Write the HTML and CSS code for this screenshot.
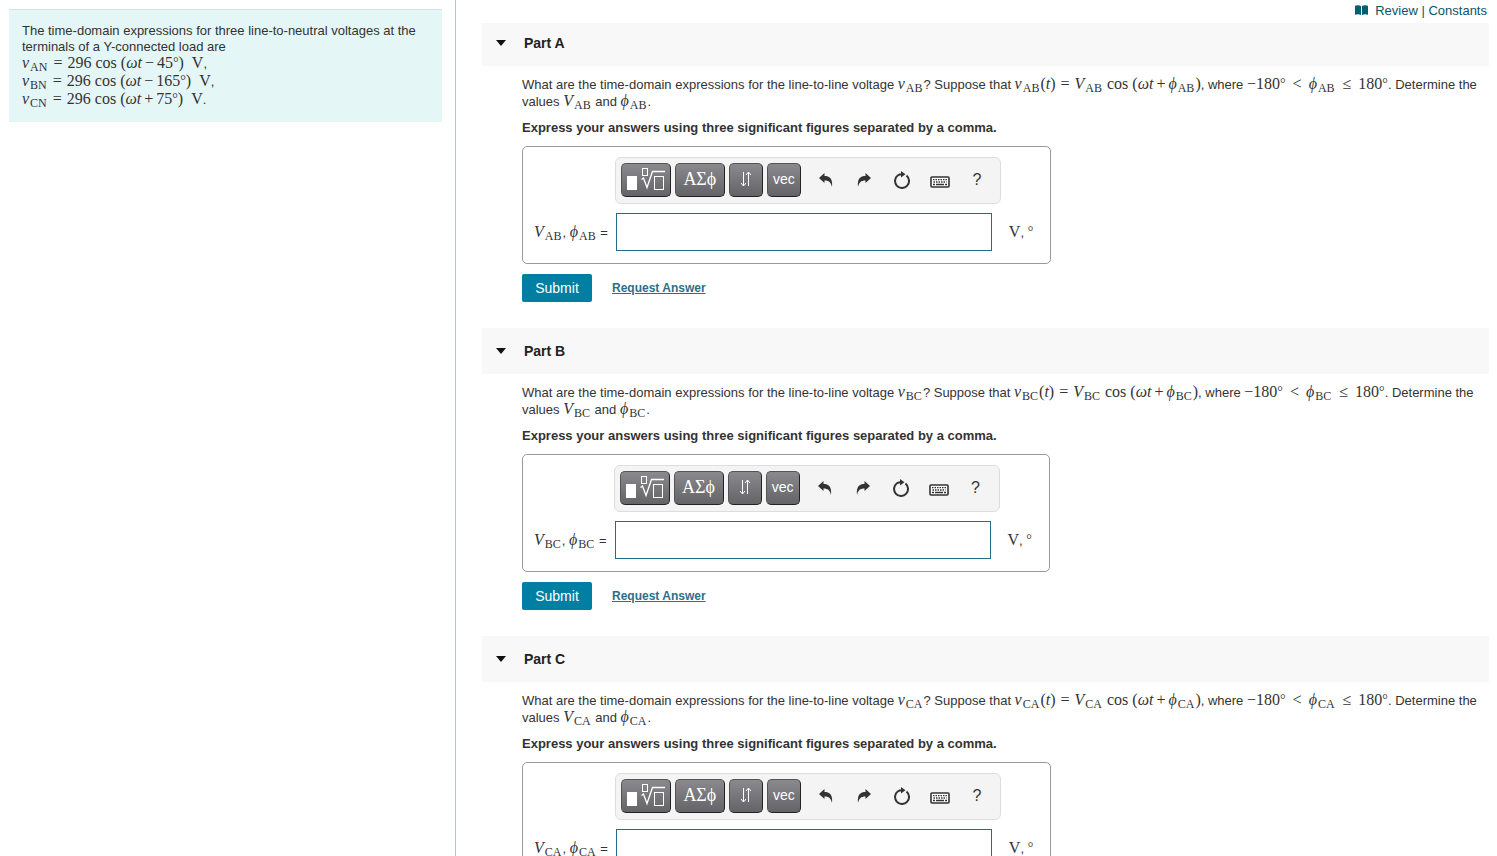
FILE: index.html
```
<!DOCTYPE html>
<html lang="en">
<head>
  <meta charset="UTF-8">
  <title>Three-phase voltages</title>
  <link rel="stylesheet" href="styles.css">
</head>
<body>
  <svg class="icon-defs" aria-hidden="true">
    <symbol id="icon-template" viewBox="0 0 38 24">
      <rect x="0" y="9" width="10" height="14" fill="#fff"/>
      <path d="M14.500 12.500l2-1.500 3.500 9.500L25.500 4.500H38" fill="none" stroke="#fff" stroke-width="1.300"/>
      <rect x="15.500" y="1.500" width="5" height="7" fill="none" stroke="#fff"/>
      <rect x="27.500" y="9.500" width="9" height="13" fill="none" stroke="#fff"/>
    </symbol>
    <symbol id="icon-arrows" viewBox="0 0 12 16">
      <path d="M3.500 1v14M1 12l2.500 3L6 12M8.500 15V1M6 4l2.500-3L11 4" fill="none" stroke="#fff"/>
    </symbol>
    <symbol id="icon-undo" viewBox="0 0 14 14">
      <path d="M0 5L5.500 0v3C10.500 3 14 5.500 13 14 12 9.500 10 7.500 5.500 7.500V10z" fill="#333"/>
    </symbol>
    <symbol id="icon-redo" viewBox="0 0 14 14">
      <path d="M14 5L8.500 0v3C3.500 3 0 5.500 1 14 2 9.500 4 7.500 8.500 7.500V10z" fill="#333"/>
    </symbol>
    <symbol id="icon-reset" viewBox="0 0 18 18">
      <path d="M13.500 4.600A7 7 0 1 1 5 4.300Q6.500 3.200 9 3.200" fill="none" stroke="#333" stroke-width="2"/>
      <path d="M8 0l4.500 3.200L8 6.400z" fill="#333"/>
    </symbol>
    <symbol id="icon-keyboard" viewBox="0 0 20 12">
      <rect x="1" y="1" width="18" height="10" rx="1" fill="#fff" stroke="#333" stroke-width="1.600"/>
      <path d="M3 3.700h14M3.500 6h13" stroke="#333" stroke-width="1.300" stroke-dasharray="1.500 1"/>
      <path d="M3 8.500h2M6 8.500h8M15 8.500h2" stroke="#333" stroke-width="1.400"/>
    </symbol>
    <symbol id="icon-book" viewBox="0 0 13 10">
      <path d="M0 .8C2 0 4.500 0 6 1v9C4.500 9 2 9 0 9.700zM13 .8C11 0 8.500 0 7 1v9c1.500-1 4-1 6-.3z" fill="#005f70"/>
    </symbol>
    <symbol id="icon-caret" viewBox="0 0 10 6">
      <path d="M0 0h10L5 6z" fill="#111"/>
    </symbol>
  </svg>

  <div class="page">
    <aside class="side">
      <div class="problem">
        <p>The time-domain expressions for three line-to-neutral voltages at the terminals of a Y-connected load are</p>
        <p class="equation"><span class="math"><var>v</var><sub>AN</sub><span class="rel">=</span>296 <span class="fn">cos</span> (<var>ωt</var><span class="bin">−</span>45<sup>°</sup>)<span class="volt">V</span></span>,</p>
        <p class="equation"><span class="math"><var>v</var><sub>BN</sub><span class="rel">=</span>296 <span class="fn">cos</span> (<var>ωt</var><span class="bin">−</span>165<sup>°</sup>)<span class="volt">V</span></span>,</p>
        <p class="equation"><span class="math"><var>v</var><sub>CN</sub><span class="rel">=</span>296 <span class="fn">cos</span> (<var>ωt</var><span class="bin">+</span>75<sup>°</sup>)<span class="volt">V</span></span>.</p>
      </div>
    </aside>

    <main class="main">
      <nav class="top-links">
        <svg class="book" width="13" height="10"><use href="#icon-book"/></svg>
        <a href="#review">Review</a> | <a href="#constants">Constants</a>
      </nav>

      <div class="parts">
        <section class="part">
          <h2 class="part-header"><svg width="10" height="6"><use href="#icon-caret"/></svg>Part A</h2>
          <div class="part-body">
            <p class="question">What are the time-domain expressions for the line-to-line voltage <span class="math"><var>v</var><sub>AB</sub></span>? Suppose that <span class="math"><var>v</var><sub>AB</sub>(<var>t</var>)<span class="rel">=</span><var>V</var><sub>AB</sub> <span class="fn">cos</span> (<var>ωt</var><span class="bin">+</span><var>ϕ</var><sub>AB</sub>)</span>, where <span class="math">−180<sup>°</sup><span class="cmp">&lt;</span><var>ϕ</var><sub>AB</sub><span class="cmp">≤</span>180<sup>°</sup></span>. Determine the values <span class="math"><var>V</var><sub>AB</sub></span> and <span class="math"><var>ϕ</var><sub>AB</sub></span>.</p>
            <p class="instruction">Express your answers using three significant figures separated by a comma.</p>
            <div class="answer">
              <div class="toolbar">
                <button class="key wide" aria-label="Templates"><svg width="38" height="24"><use href="#icon-template"/></svg></button>
                <button class="key wide greek">ΑΣϕ</button>
                <button class="key" aria-label="Arrows"><svg width="12" height="16"><use href="#icon-arrows"/></svg></button>
                <button class="key">vec</button>
                <div class="tools">
                  <button aria-label="Undo"><svg width="14" height="14"><use href="#icon-undo"/></svg></button>
                  <button aria-label="Redo"><svg width="14" height="14"><use href="#icon-redo"/></svg></button>
                  <button aria-label="Reset"><svg width="18" height="18"><use href="#icon-reset"/></svg></button>
                  <button aria-label="Keyboard"><svg class="keyboard" width="20" height="12"><use href="#icon-keyboard"/></svg></button>
                  <button>?</button>
                </div>
              </div>
              <label for="answer-a"><span class="math"><var>V</var><sub>AB</sub></span>, <span class="math"><var>ϕ</var><sub>AB</sub></span> =</label>
              <input type="text" id="answer-a">
              <span class="unit"><span class="math">V</span>, <span class="math"><sup>°</sup></span></span>
            </div>
            <div class="actions">
              <button class="submit">Submit</button>
              <a href="#request-a">Request Answer</a>
            </div>
          </div>
        </section>

        <section class="part">
          <h2 class="part-header"><svg width="10" height="6"><use href="#icon-caret"/></svg>Part B</h2>
          <div class="part-body">
            <p class="question">What are the time-domain expressions for the line-to-line voltage <span class="math"><var>v</var><sub>BC</sub></span>? Suppose that <span class="math"><var>v</var><sub>BC</sub>(<var>t</var>)<span class="rel">=</span><var>V</var><sub>BC</sub> <span class="fn">cos</span> (<var>ωt</var><span class="bin">+</span><var>ϕ</var><sub>BC</sub>)</span>, where <span class="math">−180<sup>°</sup><span class="cmp">&lt;</span><var>ϕ</var><sub>BC</sub><span class="cmp">≤</span>180<sup>°</sup></span>. Determine the values <span class="math"><var>V</var><sub>BC</sub></span> and <span class="math"><var>ϕ</var><sub>BC</sub></span>.</p>
            <p class="instruction">Express your answers using three significant figures separated by a comma.</p>
            <div class="answer">
              <div class="toolbar">
                <button class="key wide" aria-label="Templates"><svg width="38" height="24"><use href="#icon-template"/></svg></button>
                <button class="key wide greek">ΑΣϕ</button>
                <button class="key" aria-label="Arrows"><svg width="12" height="16"><use href="#icon-arrows"/></svg></button>
                <button class="key">vec</button>
                <div class="tools">
                  <button aria-label="Undo"><svg width="14" height="14"><use href="#icon-undo"/></svg></button>
                  <button aria-label="Redo"><svg width="14" height="14"><use href="#icon-redo"/></svg></button>
                  <button aria-label="Reset"><svg width="18" height="18"><use href="#icon-reset"/></svg></button>
                  <button aria-label="Keyboard"><svg class="keyboard" width="20" height="12"><use href="#icon-keyboard"/></svg></button>
                  <button>?</button>
                </div>
              </div>
              <label for="answer-b"><span class="math"><var>V</var><sub>BC</sub></span>, <span class="math"><var>ϕ</var><sub>BC</sub></span> =</label>
              <input type="text" id="answer-b">
              <span class="unit"><span class="math">V</span>, <span class="math"><sup>°</sup></span></span>
            </div>
            <div class="actions">
              <button class="submit">Submit</button>
              <a href="#request-b">Request Answer</a>
            </div>
          </div>
        </section>

        <section class="part">
          <h2 class="part-header"><svg width="10" height="6"><use href="#icon-caret"/></svg>Part C</h2>
          <div class="part-body">
            <p class="question">What are the time-domain expressions for the line-to-line voltage <span class="math"><var>v</var><sub>CA</sub></span>? Suppose that <span class="math"><var>v</var><sub>CA</sub>(<var>t</var>)<span class="rel">=</span><var>V</var><sub>CA</sub> <span class="fn">cos</span> (<var>ωt</var><span class="bin">+</span><var>ϕ</var><sub>CA</sub>)</span>, where <span class="math">−180<sup>°</sup><span class="cmp">&lt;</span><var>ϕ</var><sub>CA</sub><span class="cmp">≤</span>180<sup>°</sup></span>. Determine the values <span class="math"><var>V</var><sub>CA</sub></span> and <span class="math"><var>ϕ</var><sub>CA</sub></span>.</p>
            <p class="instruction">Express your answers using three significant figures separated by a comma.</p>
            <div class="answer">
              <div class="toolbar">
                <button class="key wide" aria-label="Templates"><svg width="38" height="24"><use href="#icon-template"/></svg></button>
                <button class="key wide greek">ΑΣϕ</button>
                <button class="key" aria-label="Arrows"><svg width="12" height="16"><use href="#icon-arrows"/></svg></button>
                <button class="key">vec</button>
                <div class="tools">
                  <button aria-label="Undo"><svg width="14" height="14"><use href="#icon-undo"/></svg></button>
                  <button aria-label="Redo"><svg width="14" height="14"><use href="#icon-redo"/></svg></button>
                  <button aria-label="Reset"><svg width="18" height="18"><use href="#icon-reset"/></svg></button>
                  <button aria-label="Keyboard"><svg class="keyboard" width="20" height="12"><use href="#icon-keyboard"/></svg></button>
                  <button>?</button>
                </div>
              </div>
              <label for="answer-c"><span class="math"><var>V</var><sub>CA</sub></span>, <span class="math"><var>ϕ</var><sub>CA</sub></span> =</label>
              <input type="text" id="answer-c">
              <span class="unit"><span class="math">V</span>, <span class="math"><sup>°</sup></span></span>
            </div>
            <div class="actions">
              <button class="submit">Submit</button>
              <a href="#request-c">Request Answer</a>
            </div>
          </div>
        </section>
      </div>
    </main>
  </div>
</body>
</html>
```
FILE: styles.css
```
* {
  box-sizing: border-box;
}

body {
  margin: 0;
  font-family: "Liberation Sans", Arial, sans-serif;
  font-size: 13px;
  color: #333;
  background-color: #fff;
}

p {
  margin: 0;
}

button {
  padding: 0;
  border: none;
  background: none;
  font-family: inherit;
  color: inherit;
  cursor: pointer;
}

.icon-defs {
  display: none;
}

.page {
  display: flex;
  height: 100vh;
}

/* the two panes scroll on their own */
.side,
.main {
  overflow-y: auto;
  scrollbar-width: none;
}

.side {
  flex: 0 0 456px;
  padding: 9px 13px 9px 9px;
  border-right: 1px solid #b4c4d0;
}

.problem {
  padding: 13px 13px 13px;
  line-height: 16px;
  background-color: #e5f6f6;
  border-top: 1px solid #d0e2e2;
}

.equation {
  line-height: 18px;
}

.main {
  flex: 1;
  padding: 0 8px 0 26px;
}

/* math */
.math {
  font-family: "Liberation Serif", "DejaVu Serif", serif;
  font-size: 16px;
  line-height: 0;
  white-space: nowrap;
}

.math sub {
  margin: 0 1px;
  font-size: 12px;
  vertical-align: -3px;
}

.math sup {
  font-size: 14px;
  vertical-align: 1px;
}

.rel {
  margin: 0 5px;
}

.cmp {
  margin: 0 7px;
}

.bin {
  margin: 0 3px;
}

.volt {
  margin-left: 8px;
}

.top-links {
  height: 23px;
  padding: 2px 2px 0 0;
  line-height: 17px;
  text-align: right;
}

.top-links,
.top-links a {
  color: #0b5566;
  text-decoration: none;
}

.book {
  margin-right: 4px;
}

.part-header {
  display: flex;
  align-items: center;
  gap: 18px;
  height: 46px;
  margin: 0;
  padding-left: 14px;
  font-size: 14px;
  color: #222;
  background-color: #f8f8f8;
}

.part:first-child .part-header {
  height: 43px;
  padding-bottom: 3px;
}

.part-body {
  padding: 10px 0 26px 40px;
}

.question {
  line-height: 17px;
}

.instruction {
  margin: 10px 0;
  line-height: 16px;
  font-weight: bold;
}

.answer {
  display: inline-grid;
  grid-template-columns: auto 377px auto;
  align-items: center;
  row-gap: 9px;
  padding: 10px 17px 12px 11px;
  vertical-align: top;
  border: 1px solid #999;
  border-radius: 5px;
}

.answer label {
  padding-right: 7px;
}

.answer input {
  width: 376px;
  height: 38px;
  margin: 0 0 0 1px;
  border: 1px solid #1f6f8b;
}

.unit {
  padding-left: 17px;
}

.toolbar {
  grid-column: 2 / 4;
  display: flex;
  gap: 4px;
  width: 386px;
  height: 47px;
  padding: 5px;
  background-color: #f4f4f4;
  border: 1px solid #ddd;
  border-radius: 6px;
}

.key {
  display: flex;
  justify-content: center;
  align-items: center;
  width: 34px;
  height: 34px;
  padding-bottom: 2px;
  font-size: 14px;
  color: #fff;
  background: linear-gradient(#8a8a8e, #646467);
  border: 1px solid #555;
  border-right-color: #222;
  border-bottom-color: #222;
  border-radius: 5px;
}

.key.wide {
  width: 50px;
}

.greek {
  font-family: "Liberation Serif", serif;
  font-size: 18px;
}

.tools {
  display: flex;
  margin-left: 2px;
}

.tools button {
  display: flex;
  justify-content: center;
  align-items: center;
  width: 38px;
  height: 34px;
  font-size: 16px;
}

.tools button:last-child {
  width: 36px;
}

.keyboard {
  margin-top: 3px;
}

.actions {
  display: flex;
  align-items: center;
  gap: 20px;
  margin-top: 10px;
}

.submit {
  width: 70px;
  height: 28px;
  font-size: 14px;
  color: #fff;
  background-color: #007fa3;
  border-radius: 2px;
}

.actions a {
  font-size: 12px;
  font-weight: bold;
  color: #2c6f8c;
}
```
